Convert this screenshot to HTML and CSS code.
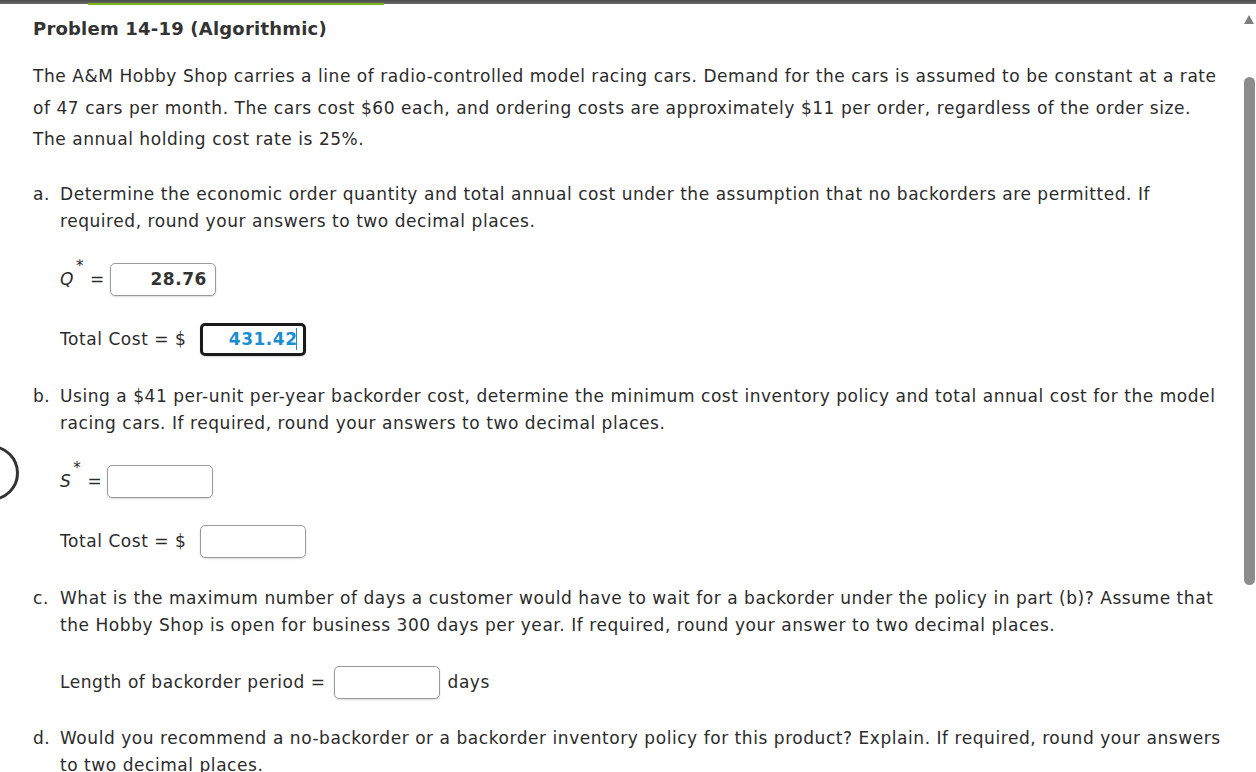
FILE: index.html
```html
<!DOCTYPE html>
<html>
<head>
<meta charset="utf-8">
<link rel="stylesheet" href="styles.css">
</head>
<body>
<div class="topbar"><div class="topbar-accent"></div></div>
<div class="viewport">
  <main class="content">
    <h1 class="title">Problem 14-19 (Algorithmic)</h1>
    <p class="intro">The A&amp;M Hobby Shop carries a line of radio-controlled model racing cars. Demand for the cars is assumed to be constant at a rate<br>of 47 cars per month. The cars cost $60 each, and ordering costs are approximately $11 per order, regardless of the order size.<br>The annual holding cost rate is 25%.</p>

    <section class="part part-a">
      <p class="question"><span class="qlabel">a.</span><span class="qtext">Determine the economic order quantity and total annual cost under the assumption that no backorders are permitted. If<br>required, round your answers to two decimal places.</span></p>
      <div class="row row-first"><span class="var">Q</span><sup class="star">*</sup><span class="eq">=</span><span class="box filled">28.76</span></div>
      <div class="row"><span class="label label-money">Total Cost = $</span><span class="box focused">431.42<span class="caret"></span></span></div>
    </section>

    <section class="part part-b">
      <p class="question"><span class="qlabel">b.</span><span class="qtext">Using a $41 per-unit per-year backorder cost, determine the minimum cost inventory policy and total annual cost for the model<br>racing cars. If required, round your answers to two decimal places.</span></p>
      <div class="row row-first"><span class="var">S</span><sup class="star">*</sup><span class="eq">=</span><span class="box"></span></div>
      <div class="row"><span class="label label-money">Total Cost = $</span><span class="box"></span></div>
    </section>

    <section class="part part-c">
      <p class="question"><span class="qlabel">c.</span><span class="qtext">What is the maximum number of days a customer would have to wait for a backorder under the policy in part (b)? Assume that<br>the Hobby Shop is open for business 300 days per year. If required, round your answer to two decimal places.</span></p>
      <div class="row row-first row-len"><span class="label">Length of backorder period =</span><span class="box"></span><span class="unit">days</span></div>
    </section>

    <section class="part part-d">
      <p class="question"><span class="qlabel">d.</span><span class="qtext">Would you recommend a no-backorder or a backorder inventory policy for this product? Explain. If required, round your answers<br>to two decimal places.</span></p>
    </section>
  </main>
  <div class="scrollbar">
    <div class="arrow-up"></div>
    <div class="thumb"></div>
  </div>
  <div class="ring"></div>
</div>
</body>
</html>
```

FILE: styles.css
```css
html, body {
  margin: 0;
  padding: 0;
  background: #fff;
  height: 100%;
  overflow: hidden;
}
body {
  font-family: "DejaVu Sans", Verdana, sans-serif;
  font-size: 17px;
  letter-spacing: 0.55px;
  color: #2b2b2b;
}
.topbar {
  height: 4px;
  background: linear-gradient(#4a4a4a, #6a6a6a);
  position: relative;
}
.topbar-accent {
  position: absolute;
  left: 88px;
  width: 296px;
  bottom: -1px;
  height: 2px;
  background: #7cb518;
}
.viewport {
  position: relative;
  height: 768px;
}
.content {
  padding: 0 0 0 33px;
  white-space: nowrap;
}
.title {
  margin: 0;
  padding-top: 13px;
  font-size: 18px;
  letter-spacing: 0.2px;
  font-weight: bold;
  line-height: 24px;
  color: #333;
}
.intro {
  margin: 20px 0 0 0;
  line-height: 31.5px;
}
.part { margin: 0; }
.part-a { margin-top: 25px; }
.part-b { margin-top: 27px; }
.part-c { margin-top: 27px; }
.part-d { margin-top: 26px; }
.question {
  margin: 0;
  display: flex;
  line-height: 27px;
}
.qlabel { width: 27px; flex: none; }
.row {
  display: flex;
  align-items: center;
  margin-left: 27px;
  height: 33px;
  margin-top: 27px;
}
.row-first { margin-top: 28px; }
.row-len { margin-top: 27px; }
.var { font-style: italic; }
.star {
  font-size: 15px;
  align-self: flex-start;
  margin: -4px 0 0 2px;
  line-height: 15px;
}
.eq { margin: 0 5px 0 6px; }
.label { margin-right: 8px; }
.label-money { margin-right: 14px; }
.unit { margin-left: 8px; }
.box {
  box-sizing: border-box;
  width: 106px;
  height: 33px;
  border: 1px solid #9a9a9a;
  border-radius: 5px;
  box-shadow: 0 1px 2px rgba(0,0,0,0.15);
  display: inline-flex;
  align-items: center;
  justify-content: flex-end;
  padding-right: 8px;
  font-weight: bold;
  font-size: 17px;
  letter-spacing: 0.5px;
  color: #333;
}
.box.focused {
  border: 3px solid #1a1a1a;
  color: #1b8ed2;
  padding-right: 6px;
}
.caret {
  display: inline-block;
  width: 1px;
  height: 22px;
  background: #1b8ed2;
  margin-left: -1px;
}
.scrollbar {
  position: absolute;
  right: 0;
  top: 0;
  width: 14px;
  height: 768px;
  background: #fff;
}
.arrow-up {
  width: 0;
  height: 0;
  margin: 11px auto 0 auto;
  border-left: 5px solid transparent;
  border-right: 5px solid transparent;
  border-bottom: 9px solid #7f7f7f;
}
.thumb {
  margin: 53px 0 0 2px;
  width: 11px;
  height: 508px;
  border-radius: 6px;
  background: #8c8c8c;
}
.ring {
  position: absolute;
  left: -37px;
  top: 441px;
  width: 50px;
  height: 50px;
  border: 3px solid #333;
  border-radius: 50%;
}
```
